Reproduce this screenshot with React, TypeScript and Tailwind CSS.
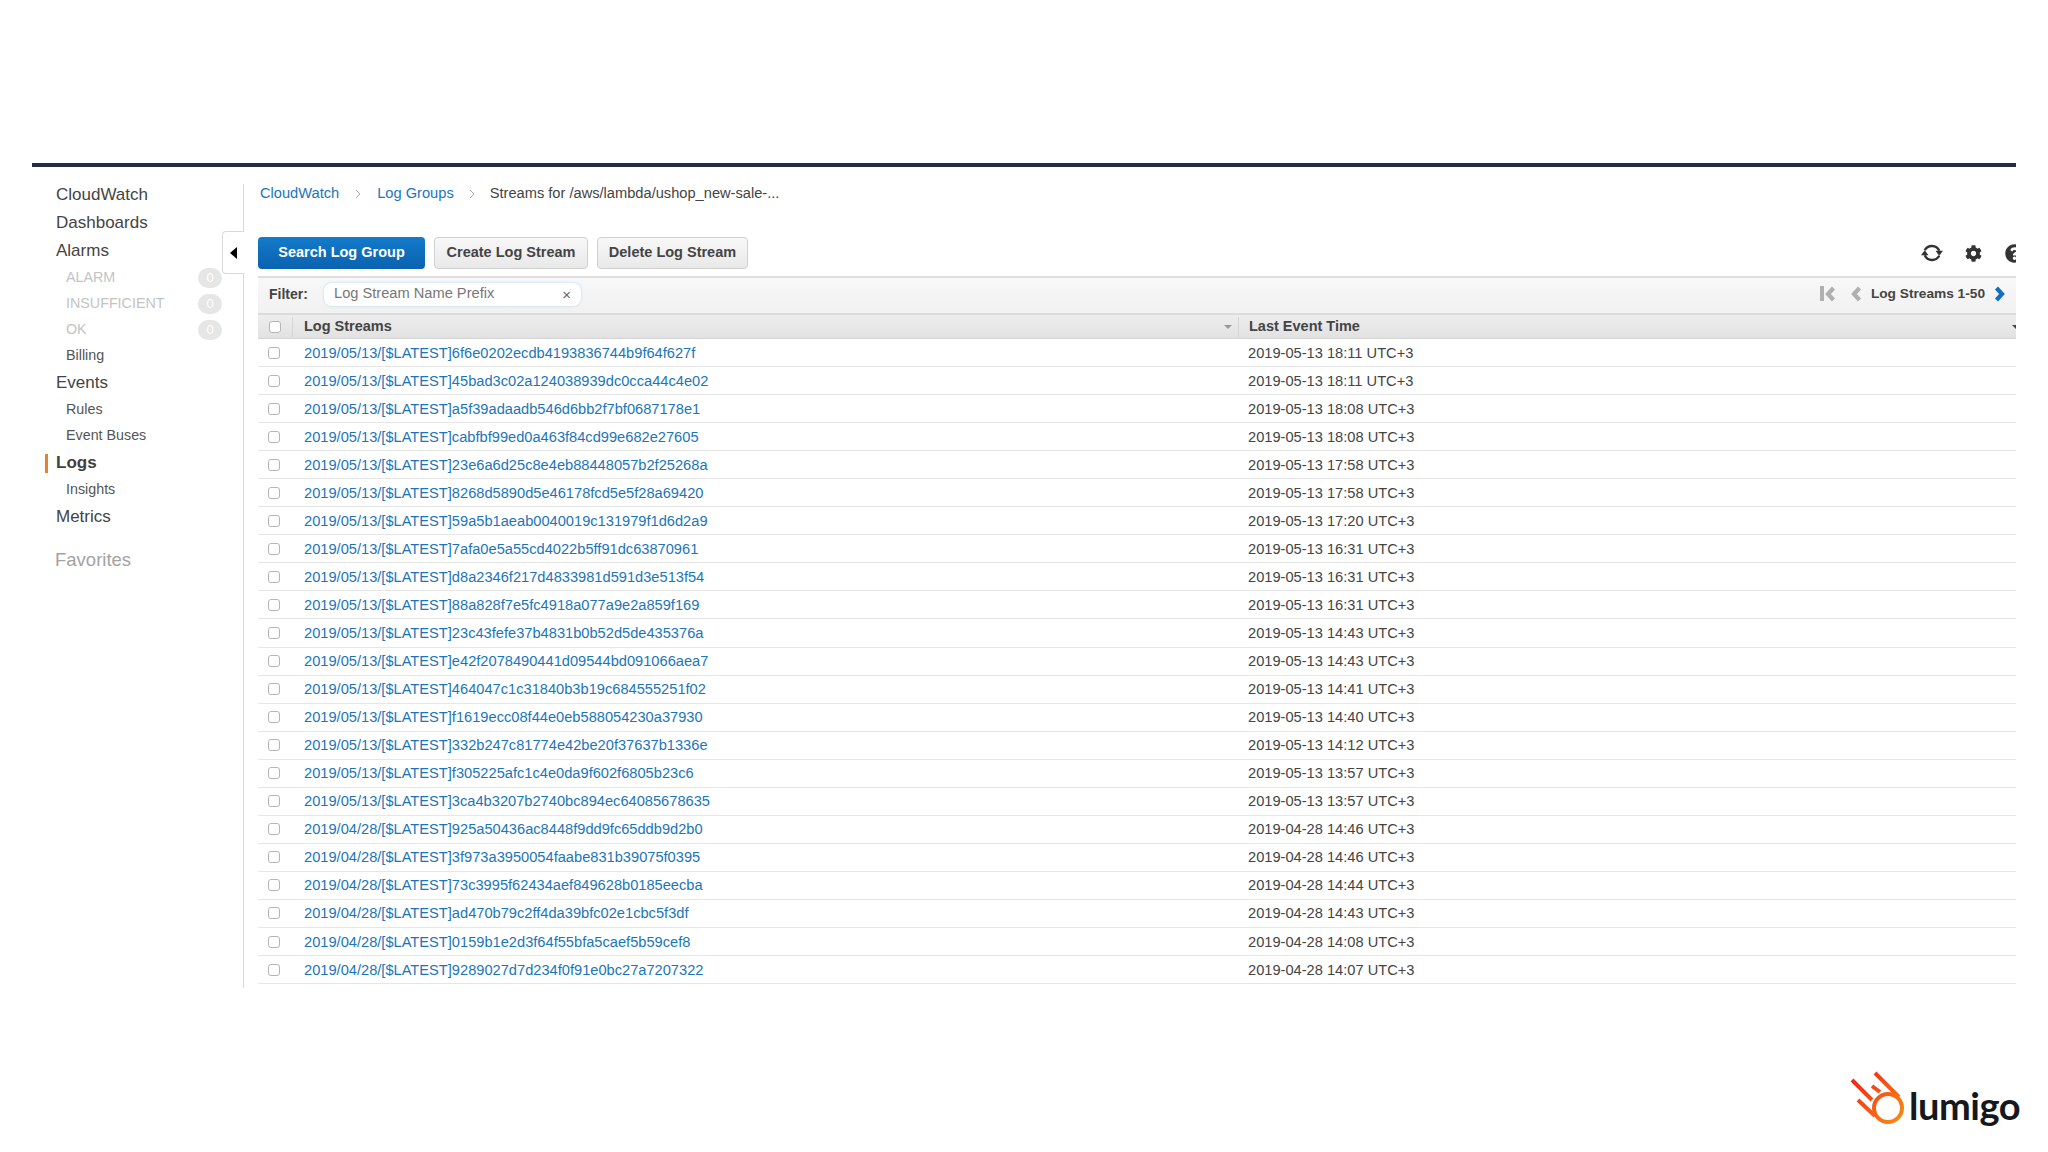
import { FaCog, FaQuestionCircle } from "react-icons/fa";

const ROWS: [string, string][] = [
  ["2019/05/13/[$LATEST]6f6e0202ecdb4193836744b9f64f627f", "2019-05-13 18:11 UTC+3"],
  ["2019/05/13/[$LATEST]45bad3c02a124038939dc0cca44c4e02", "2019-05-13 18:11 UTC+3"],
  ["2019/05/13/[$LATEST]a5f39adaadb546d6bb2f7bf0687178e1", "2019-05-13 18:08 UTC+3"],
  ["2019/05/13/[$LATEST]cabfbf99ed0a463f84cd99e682e27605", "2019-05-13 18:08 UTC+3"],
  ["2019/05/13/[$LATEST]23e6a6d25c8e4eb88448057b2f25268a", "2019-05-13 17:58 UTC+3"],
  ["2019/05/13/[$LATEST]8268d5890d5e46178fcd5e5f28a69420", "2019-05-13 17:58 UTC+3"],
  ["2019/05/13/[$LATEST]59a5b1aeab0040019c131979f1d6d2a9", "2019-05-13 17:20 UTC+3"],
  ["2019/05/13/[$LATEST]7afa0e5a55cd4022b5ff91dc63870961", "2019-05-13 16:31 UTC+3"],
  ["2019/05/13/[$LATEST]d8a2346f217d4833981d591d3e513f54", "2019-05-13 16:31 UTC+3"],
  ["2019/05/13/[$LATEST]88a828f7e5fc4918a077a9e2a859f169", "2019-05-13 16:31 UTC+3"],
  ["2019/05/13/[$LATEST]23c43fefe37b4831b0b52d5de435376a", "2019-05-13 14:43 UTC+3"],
  ["2019/05/13/[$LATEST]e42f2078490441d09544bd091066aea7", "2019-05-13 14:43 UTC+3"],
  ["2019/05/13/[$LATEST]464047c1c31840b3b19c684555251f02", "2019-05-13 14:41 UTC+3"],
  ["2019/05/13/[$LATEST]f1619ecc08f44e0eb588054230a37930", "2019-05-13 14:40 UTC+3"],
  ["2019/05/13/[$LATEST]332b247c81774e42be20f37637b1336e", "2019-05-13 14:12 UTC+3"],
  ["2019/05/13/[$LATEST]f305225afc1c4e0da9f602f6805b23c6", "2019-05-13 13:57 UTC+3"],
  ["2019/05/13/[$LATEST]3ca4b3207b2740bc894ec64085678635", "2019-05-13 13:57 UTC+3"],
  ["2019/04/28/[$LATEST]925a50436ac8448f9dd9fc65ddb9d2b0", "2019-04-28 14:46 UTC+3"],
  ["2019/04/28/[$LATEST]3f973a3950054faabe831b39075f0395", "2019-04-28 14:46 UTC+3"],
  ["2019/04/28/[$LATEST]73c3995f62434aef849628b0185eecba", "2019-04-28 14:44 UTC+3"],
  ["2019/04/28/[$LATEST]ad470b79c2ff4da39bfc02e1cbc5f3df", "2019-04-28 14:43 UTC+3"],
  ["2019/04/28/[$LATEST]0159b1e2d3f64f55bfa5caef5b59cef8", "2019-04-28 14:08 UTC+3"],
  ["2019/04/28/[$LATEST]9289027d7d234f0f91e0bc27a7207322", "2019-04-28 14:07 UTC+3"],
];

function Checkbox() {
  return <span className="block w-[12px] h-[12px] rounded-[3px] border border-[#b5b5b5] bg-white" />;
}

function NavMain({ label, active }: { label: string; active?: boolean }) {
  return (
    <div className={`h-[28px] flex items-center pl-[8px] text-[17px] ${active ? "font-bold text-[#3f3f3f]" : "text-[#444]"}`}>
      <span className={`-ml-[8px] mr-[8px] w-[3px] h-[19px] ${active ? "bg-[#e9802e]" : "bg-transparent"}`} />
      {label}
    </div>
  );
}

function NavSub({ label, count }: { label: string; count?: boolean }) {
  return (
    <div className={`h-[26px] flex items-center justify-between pl-[21px] text-[14.3px] ${count ? "text-[#c4c4c4]" : "text-[#555]"}`}>
      {label}
      {count && (
        <span className="w-[24px] h-[20px] rounded-full bg-[#e6e6e6] text-white text-[13px] flex items-center justify-center">0</span>
      )}
    </div>
  );
}

function Sidebar() {
  return (
    <div className="w-[211px] shrink-0 pl-[13px] pr-[21px] pt-[14px]">
      <NavMain label="CloudWatch" />
      <NavMain label="Dashboards" />
      <NavMain label="Alarms" />
      <NavSub label="ALARM" count />
      <NavSub label="INSUFFICIENT" count />
      <NavSub label="OK" count />
      <NavSub label="Billing" />
      <NavMain label="Events" />
      <NavSub label="Rules" />
      <NavSub label="Event Buses" />
      <NavMain label="Logs" active />
      <NavSub label="Insights" />
      <NavMain label="Metrics" />
      <div className="mt-[15px] pl-[10px] text-[18.5px] text-[#a3a3a3]">Favorites</div>
    </div>
  );
}

function GreyButton({ label, width }: { label: string; width: string }) {
  return (
    <button className={`h-[32px] ${width} rounded-[4px] border border-[#d0d0d0] bg-linear-to-b from-[#f8f8f8] to-[#e9e9e9] text-[14.5px] font-bold text-[#444]`}>
      {label}
    </button>
  );
}

function Chevron({ left, className }: { left?: boolean; className: string }) {
  return (
    <svg width="12" height="16" viewBox="0 0 12 16" className={className}>
      <path d={left ? "M9.5 2 4 8l5.5 6" : "M2.5 2 8 8l-5.5 6"} fill="none" stroke="currentColor" strokeWidth="4.2" />
    </svg>
  );
}

function CrumbArrow({ className }: { className: string }) {
  return (
    <svg width="6" height="10" viewBox="0 0 6 10" className={className}>
      <path d="M1 1l4 4-4 4" fill="none" stroke="#a8a8a8" strokeWidth="1" />
    </svg>
  );
}

function RefreshIcon() {
  return (
    <svg width="22" height="22" viewBox="0 0 20 20" className="mr-[22px]">
      <g fill="none" stroke="#333" strokeWidth="2.2">
        <path d="M3.4 7.5A7.4 7.4 0 0 1 16.6 8" />
        <path d="M16.6 12.5A7.4 7.4 0 0 1 3.4 12" />
      </g>
      <path d="M13.2 8H20l-3.4 4.4zM0 12h6.8L3.4 7.6z" fill="#333" />
    </svg>
  );
}

function Logo() {
  return (
    <div className="flex items-center">
      <svg width="70" height="70" viewBox="0 0 70 70" className="-mr-[3px]">
        <defs>
          <linearGradient id="lumigo" gradientUnits="userSpaceOnUse" x1="10" y1="10" x2="60" y2="55">
            <stop offset="0" stopColor="#f0211c" />
            <stop offset="1" stopColor="#fb8a12" />
          </linearGradient>
        </defs>
        <g fill="none" stroke="url(#lumigo)" strokeWidth="4">
          <circle cx="46" cy="43" r="14" />
          <path d="M33 8 57 32M10 15l20 20M30 21l8 6M16 35l17 16" />
        </g>
      </svg>
      <span className="font-['Lato',sans-serif] font-bold tracking-[-0.5px] text-[38px] leading-none text-[#15181d] mt-[10px]">lumigo</span>
    </div>
  );
}

export default function App() {
  return (
    <div className="min-h-[1152px] bg-white font-['Liberation_Sans',Arial,sans-serif] pt-[163px] overflow-hidden">
      <div className="mx-[32px] w-[1984px]">
        <div className="h-[4px] bg-[#232f3e]" />
        <div className="relative flex h-[821px]">
          <Sidebar />
          <div className="flex-1 min-w-0 border-l border-[#d9d9d9] mt-[17px] pl-[14px] overflow-hidden">
            <div className="h-[20px] flex items-center text-[14.65px] text-[#444]">
              <span className="text-[#1b75bb] ml-[2px]">CloudWatch</span>
              <CrumbArrow className="mx-[16px]" />
              <span className="text-[#1b75bb]">Log Groups</span>
              <CrumbArrow className="mx-[15px]" />
              <span>Streams for /aws/lambda/ushop_new-sale-...</span>
            </div>

            <div className="mt-[33px] flex items-center gap-[9px]">
              <button className="h-[32px] w-[167px] rounded-[4px] bg-linear-to-b from-[#137bcb] to-[#0a62ae] text-[14.5px] font-bold text-white">
                Search Log Group
              </button>
              <GreyButton label="Create Log Stream" width="w-[154px]" />
              <GreyButton label="Delete Log Stream" width="w-[151px]" />
              <div className="ml-auto flex items-center text-[#333]">
                <RefreshIcon />
                <FaCog className="w-[17px] h-[17px] mr-[23px]" />
                <FaQuestionCircle className="w-[19px] h-[19px] -mr-[8px]" />
              </div>
            </div>

            <div className="mt-[7px] h-[37px] pb-[3px] border-t-2 border-[#dedede] bg-linear-to-b from-[#f8f8f8] to-[#f1f1f1] flex items-center pl-[11px] text-[14px]">
              <span className="font-bold text-[#444] w-[55px]">Filter:</span>
              <div className="w-[257px] h-[23px] rounded-[8px] bg-white shadow-[0_0_3px_#bcd8ee] flex items-center justify-between pl-[10px] pr-[10px] text-[14.65px] text-[#777]">
                Log Stream Name Prefix
                <span className="text-[15px] text-[#666] leading-none">×</span>
              </div>
              <div className="ml-auto flex items-center text-[13.7px] font-bold text-[#444]">
                <span className="mr-[14px] flex items-center">
                  <span className="w-[4px] h-[15px] bg-[#b0b0b0]" />
                  <Chevron left className="text-[#b0b0b0]" />
                </span>
                <Chevron left className="text-[#b0b0b0] mr-[9px]" />
                <span>Log Streams 1-50</span>
                <Chevron className="text-[#1170c2] ml-[9px] mr-[10px]" />
              </div>
            </div>

            <div className="grid grid-cols-[980px_1fr] h-[26px] items-center border-t-2 border-b border-t-[#dcdcdc] border-b-[#d4d4d4] bg-linear-to-b from-[#ededed] to-[#e2e2e2] text-[14.5px] font-bold text-[#444]">
              <div className="flex items-center h-full">
                <div className="w-[35px] pl-[11px] h-[20px] flex items-center border-r border-[#d5d5d5]">
                  <Checkbox />
                </div>
                <span className="ml-[11px]">Log Streams</span>
                <span className="ml-auto mr-[6px] w-0 h-0 border-x-[4px] border-x-transparent border-t-[4px] border-t-[#999]" />
              </div>
              <div className="flex items-center h-[20px] border-l border-[#d5d5d5] pl-[10px] -mr-[4px]">
                Last Event Time
                <span className="ml-auto w-0 h-0 border-x-[4px] border-x-transparent border-t-[4px] border-t-[#444]" />
              </div>
            </div>

            {ROWS.map(([name, time]) => (
              <div key={name} className="grid grid-cols-[980px_1fr] h-[28.05px] items-center border-b border-[#e6e6e6] text-[14.65px]">
                <div className="flex items-center">
                  <div className="w-[46px] pl-[10px]">
                    <Checkbox />
                  </div>
                  <a className="mt-[2px] text-[#1b75bb] whitespace-nowrap">{name}</a>
                </div>
                <div className="mt-[2px] pl-[10px] text-[#444]">{time}</div>
              </div>
            ))}
          </div>
          <div className="absolute left-[190px] top-[64px] w-[22px] h-[43px] bg-white border border-r-0 border-[#d9d9d9] rounded-l-[4px] flex items-center justify-center">
            <span className="w-0 h-0 border-y-[6px] border-y-transparent border-r-[7px] border-r-black" />
          </div>
        </div>
        <div className="flex justify-end mt-[77px] -mr-[4px]">
          <Logo />
        </div>
      </div>
    </div>
  );
}
